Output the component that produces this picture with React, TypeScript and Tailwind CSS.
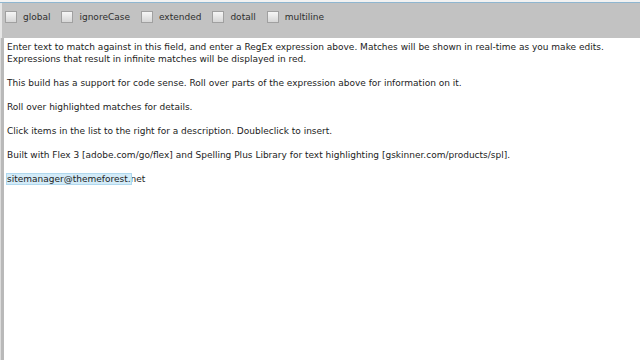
import React from 'react';

const flags = ['global', 'ignoreCase', 'extended', 'dotall', 'multiline'];

function Flag({ label }: { label: string }) {
  return (
    <div className="flex items-center mr-[11px]">
      <div className="w-[12px] h-[12px] border border-[#a0a0a0] bg-gradient-to-b from-[#f6f6f6] to-[#d6d6d6]" />
      <span className="ml-[6px] text-[#2e2e2e]">{label}</span>
    </div>
  );
}

export default function App() {
  const paragraphs = [
    'Enter text to match against in this field, and enter a RegEx expression above. Matches will be shown in real-time as you make edits.\nExpressions that result in infinite matches will be displayed in red.',
    'This build has a support for code sense. Roll over parts of the expression above for information on it.',
    'Roll over highlighted matches for details.',
    'Click items in the list to the right for a description. Doubleclick to insert.',
    'Built with Flex 3 [adobe.com/go/flex] and Spelling Plus Library for text highlighting [gskinner.com/products/spl].',
  ];

  return (
    <div
      className="w-[640px] h-[360px] flex flex-col bg-[#c2c2c2] overflow-hidden text-[9px] leading-[12px]"
      style={{ fontFamily: '"DejaVu Sans", Verdana, sans-serif' }}
    >
      <div className="h-[2px] bg-[#f2f2f2]" />
      <div className="h-[1px] bg-[#8fb6d0]" />
      <div className="h-[35px] flex items-start pt-[8px] pl-[3px] border-l-[2px] border-[#e6e6e6]">
        {flags.map((f) => (
          <Flag key={f} label={f} />
        ))}
      </div>
      <div className="flex-1 flex">
        <div className="w-[1px] bg-[#dcdcdc]" />
        <div className="w-[3px] bg-[#b9b9b9]" />
        <div className="flex-1 bg-white pl-[3px] pt-[3px] text-[#1c1c1c] whitespace-pre-wrap">
          {paragraphs.map((p, i) => (
            <div key={i} className="mb-[12px]">
              {p}
            </div>
          ))}
          <div>
            <span className="bg-[#d3ebf8] outline outline-1 outline-[#b0d8ee]">sitemanager@themeforest.</span>
            net
          </div>
        </div>
      </div>
    </div>
  );
}
